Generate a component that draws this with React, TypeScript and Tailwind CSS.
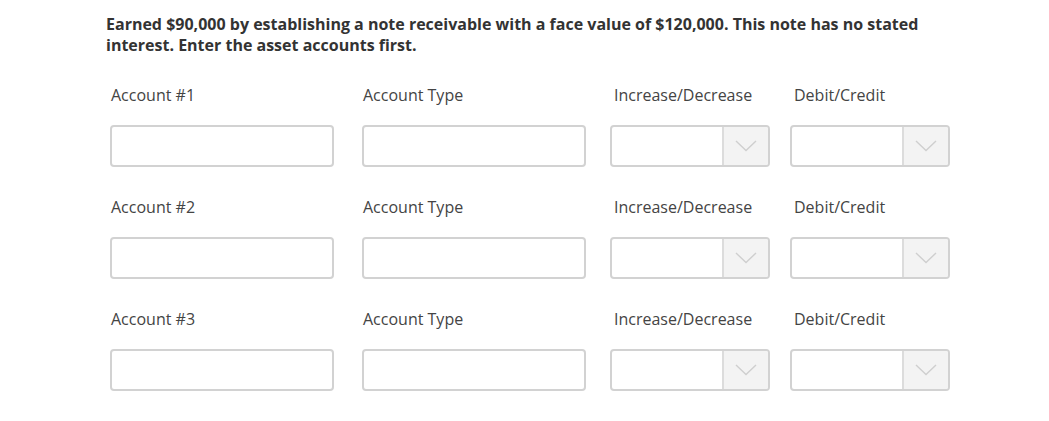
import { ReactNode } from "react";

const font = { fontFamily: '"Open Sans", "Noto Sans", sans-serif' };

function Label({ children, className = "" }: { children: ReactNode; className?: string }) {
  return <div className={`h-6 text-base leading-6 text-[#444] ${className}`}>{children}</div>;
}

function TextBox() {
  return <div className="h-[42px] w-[224px] rounded-[4px] border-2 border-[#d2d2d2] bg-white" />;
}

function SelectBox() {
  return (
    <div className="flex h-[42px] w-[160px] overflow-hidden rounded-[4px] border-2 border-[#d2d2d2] bg-white">
      <div className="flex-1" />
      <div className="flex w-[46px] items-center justify-center border-l-2 border-[#dcdcdc] bg-[#f3f3f3]">
        <svg width="22" height="12" viewBox="0 0 22 12" fill="none">
          <path d="M1 1 L11 10.5 L21 1" stroke="#cfcfcf" strokeWidth="1.4" />
        </svg>
      </div>
    </div>
  );
}

function Row({ n }: { n: number }) {
  return (
    <div className="flex pb-[28px]">
      <div className="w-[252px]">
        <Label className="pl-px">Account #{n}</Label>
        <div className="mt-[18px]"><TextBox /></div>
      </div>
      <div className="w-[248px]">
        <Label className="pl-px">Account Type</Label>
        <div className="mt-[18px]"><TextBox /></div>
      </div>
      <div className="w-[180px]">
        <Label className="pl-1">Increase/Decrease</Label>
        <div className="mt-[18px]"><SelectBox /></div>
      </div>
      <div className="w-[160px]">
        <Label className="pl-1">Debit/Credit</Label>
        <div className="mt-[18px]"><SelectBox /></div>
      </div>
    </div>
  );
}

export default function App() {
  return (
    <div className="min-h-[421px] bg-white pl-[106px] pt-[14px]" style={font}>
      <p className="w-[840px] text-base font-bold leading-[21px] text-[#333]">
        Earned $90,000 by establishing a note receivable with a face value of $120,000. This note has no stated
        interest. Enter the asset accounts first.
      </p>
      <div className="mt-[27px] pl-[4px]">
        <Row n={1} />
        <Row n={2} />
        <Row n={3} />
      </div>
    </div>
  );
}
